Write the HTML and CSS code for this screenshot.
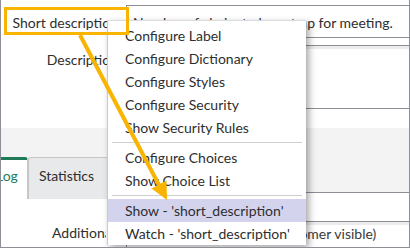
FILE: index.html
```html
<!DOCTYPE html>
<html lang="en">
  <head>
    <meta charset="UTF-8">
    <meta name="viewport" content="width=device-width, initial-scale=1.0">
    <title>Short description - context menu</title>
    <link rel="stylesheet" href="styles.css">
  </head>
  <body>
    <div class="frame">
      <div class="form-row first">
        <label class="field-label">Short description</label>
        <div class="field input">Number of chairs to be set up for meeting.</div>
      </div>
      <div class="form-row desc">
        <label class="field-label">Description</label>
        <div class="field textarea"></div>
      </div>
      <div class="section">
        <div class="tabs">
          <div class="tab active">Log</div>
          <div class="tab">Statistics</div>
        </div>
      </div>
      <div class="form-row comments">
        <label class="field-label">Additional comments</label>
        <div class="field textarea">
          <span class="placeholder">Additional comments (Customer visible)</span>
        </div>
      </div>

      <ul class="context-menu">
        <li>Configure Label</li>
        <li>Configure Dictionary</li>
        <li>Configure Styles</li>
        <li>Configure Security</li>
        <li>Show Security Rules</li>
        <li class="sep"></li>
        <li>Configure Choices</li>
        <li>Show Choice List</li>
        <li class="sep"></li>
        <li class="hover">Show - 'short_description'</li>
        <li>Watch - 'short_description'</li>
      </ul>

      <!-- annotation: box round the label and arrow to the menu item -->
      <svg class="callout" width="410" height="248" viewBox="0 0 410 248">
        <rect x="5.5" y="8.5" width="122" height="25" fill="none" stroke="#f8b400" stroke-width="3"/>
        <line x1="80" y1="35" x2="159" y2="185" stroke="#f8b400" stroke-width="4"/>
        <polygon points="167,200 151.5,188.5 166.5,180.5" fill="#f8b400"/>
      </svg>
    </div>
  </body>
</html>
```

FILE: styles.css
```css
body {
  margin: 0;
  font-family: Lato, "Noto Sans", sans-serif;
  font-size: 14px;
  color: #2e2e2e;
}
.frame {
  position: relative;
  width: 410px;
  height: 248px;
  box-sizing: border-box;
  border: 1px solid #8c9096;
  border-top: 0;
  overflow: hidden;
  background: #fff;
}
.form-row {
  display: flex;
}
.form-row.first {
  margin-top: 5px;
}
.form-row.desc {
  margin-top: 7px;
}
.field-label {
  flex-shrink: 0;
  width: 125px;
  box-sizing: border-box;
  padding-right: 8px;
  text-align: right;
  white-space: nowrap;
  overflow: hidden;
}
.first .field-label {
  padding-top: 2px;
  line-height: 31px;
}
.desc .field-label {
  padding-top: 7px;
  line-height: 16px;
}
.field {
  flex: 1;
  box-sizing: border-box;
  border-top: 1px solid #8c9096;
  border-left: 1px solid #8c9096;
}
.field.input {
  height: 33px;
  padding: 2px 0 0 6px;
  line-height: 29px;
  border-bottom: 1px solid #8c9096;
  white-space: nowrap;
  overflow: hidden;
}
.field.textarea {
  height: 64px;
  border-bottom: 1px solid #8c9096;
  box-shadow: inset 0 3px 0 #ececec;
}
.section {
  margin-top: 19px;
  height: 65px;
  box-sizing: border-box;
  background: #f3f3f4;
  border-bottom: 1px solid #8c9096;
}
.tabs {
  display: flex;
  padding-top: 29px;
  margin-left: -15px;
}
.tab {
  height: 42px;
  box-sizing: border-box;
  padding: 10px 14px 0 10px;
  line-height: 16px;
  border: 1px solid #c4c6c8;
  border-bottom: 0;
  border-radius: 3px 3px 0 0;
  background: #e8e9ea;
}
.tab.active {
  padding: 8px 9px 0;
  border-top: 3px solid #1e7a57;
  background: #fff;
  color: #1b7d5b;
}
.form-row.comments {
  margin-top: 28px;
}
.comments .field-label {
  width: 105px;
  padding: 4px 0 0 51px;
  text-align: left;
  line-height: 16px;
}
.comments .field.textarea {
  height: 30px;
  margin-left: 20px;
  border-bottom: 0;
  padding: 4px 0 0 7px;
  line-height: 16px;
  white-space: nowrap;
}
.placeholder {
  color: #3a3a3a;
}
.context-menu {
  position: absolute;
  left: 106px;
  top: 20px;
  width: 199px;
  margin: 0;
  padding: 3px 0 0;
  list-style: none;
  box-sizing: border-box;
  background: #fff;
  border-left: 1px solid #c9c9c9;
  border-top: 1px solid #dcdcdc;
  box-shadow: 3px 3px 7px rgba(0, 0, 0, 0.35);
}
.context-menu li {
  height: 23px;
  line-height: 23px;
  padding-left: 17px;
  white-space: nowrap;
}
.context-menu li.sep {
  height: 1px;
  padding: 0;
  margin: 3px 4px;
  background: #cfcfcf;
}
.context-menu li.hover {
  background: #d3d3ee;
}
.callout {
  position: absolute;
  left: -1px;
  top: 0;
  pointer-events: none;
}
```
